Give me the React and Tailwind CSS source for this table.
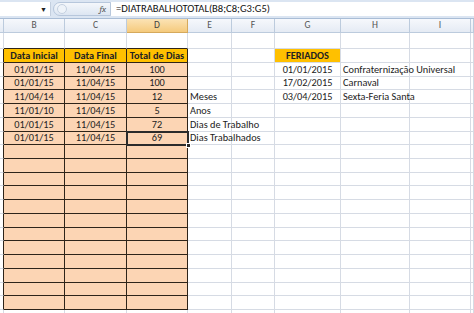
import React from "react";

const FONT = { fontFamily: "Carlito, Lato, 'Open Sans', sans-serif" };

// column widths: sliver of A, then B..I, J cut off at the edge
const COLS = [
  { key: "A", w: 4 },
  { key: "B", w: 61 },
  { key: "C", w: 62 },
  { key: "D", w: 61 },
  { key: "E", w: 44 },
  { key: "F", w: 43 },
  { key: "G", w: 66 },
  { key: "H", w: 69 },
  { key: "I", w: 61 },
  { key: "J", w: 3 },
];

const DATA = [
  ["01/01/15", "11/04/15", "100", ""],
  ["01/01/15", "11/04/15", "100", ""],
  ["11/04/14", "11/04/15", "12", "Meses"],
  ["11/01/10", "11/04/15", "5", "Anos"],
  ["01/01/15", "11/04/15", "72", "Dias de Trabalho"],
  ["01/01/15", "11/04/15", "69", "Dias Trabalhados"],
];

const HOLIDAYS = [
  ["01/01/2015", "Confraternização Universal"],
  ["17/02/2015", "Carnaval"],
  ["03/04/2015", "Sexta-Feria Santa"],
];

const GRID = "border-[#d6dbe4]";

function Cell({ w, className = "", children }) {
  return (
    <div
      className={`shrink-0 border-r border-b flex items-center overflow-visible whitespace-nowrap text-[10.3px] text-[#222] ${className}`}
      style={{ width: w }}
    >
      {children}
    </div>
  );
}

function FormulaBar() {
  return (
    <div className="h-[19px] flex items-stretch bg-[#dbe5f2] border-b border-[#a9bdd6]">
      <div className="w-[51px] mt-[2px] mb-[2px] bg-white flex items-center justify-end pr-[3px] border-r border-[#c3cfdf]">
        <span className="text-[7px] text-[#222] leading-none">▼</span>
      </div>
      <div className="w-[58px] my-[2px] ml-[2px] rounded-l-full bg-gradient-to-b from-[#f4f7fb] to-[#dde6f2] border border-[#b7c7dc] flex items-center justify-between pl-[3px] pr-[4px]">
        <div className="w-[10px] h-[10px] rounded-full border border-[#c4d0e0] bg-[#eef3f9]" />
        <span className="italic text-[9px] text-[#555] font-serif leading-none">fx</span>
      </div>
      <div className="flex-1 my-[2px] bg-white flex items-center pl-[5px] text-[10.6px] text-[#111]" style={FONT}>
        =DIATRABALHOTOTAL(B8;C8;G3:G5)
      </div>
    </div>
  );
}

function HeaderRow() {
  return (
    <div className="h-[14px] flex">
      {COLS.map((c) => (
        <div
          key={c.key}
          className={`shrink-0 border-r border-b flex items-center justify-center text-[9.5px] ${
            c.key === "D"
              ? "bg-gradient-to-b from-[#fbe3b5] to-[#f5ca7c] border-[#d5a95c] text-[#444]"
              : "bg-gradient-to-b from-[#f6f8fc] to-[#e5ebf4] border-[#bccbdd] text-[#555]"
          }`}
          style={{ width: c.w, ...FONT }}
        >
          {c.key === "A" || c.key === "J" ? "" : c.key}
        </div>
      ))}
    </div>
  );
}

function SheetRow({ height, cells }) {
  return (
    <div className="flex" style={{ height }}>
      {cells}
    </div>
  );
}

export default function App() {
  const rows = [];
  const H = 13.73;

  // row 1: blank, with dark bottom edges over B..D
  rows.push(
    <SheetRow
      key="r1"
      height={16.3}
      cells={COLS.map((c) => (
        <Cell
          key={c.key}
          w={c.w}
          className={["B", "C", "D"].includes(c.key) ? `${GRID} border-b-[#2e2419]` : GRID}
        />
      ))}
    />
  );

  // table rows: header, six data rows, twelve blank rows
  const total = 19;
  for (let i = 0; i < total; i++) {
    const isHead = i === 0;
    const d = !isHead && i <= 6 ? DATA[i - 1] : null;
    const hol = i >= 1 && i <= 3 ? HOLIDAYS[i - 1] : null;
    const cells = COLS.map((c) => {
      if (c.key === "A")
        return <Cell key={c.key} w={c.w} className={`${GRID} border-r-[#2e2419]`} />;
      if (["B", "C", "D"].includes(c.key)) {
        const idx = { B: 0, C: 1, D: 2 }[c.key];
        const text = isHead
          ? ["Data Inicial", "Data Final", "Total de Dias"][idx]
          : d
          ? d[idx]
          : "";
        return (
          <Cell
            key={c.key}
            w={c.w}
            className={`border-[#2e2419] justify-center ${
              isHead ? "bg-[#ffc000] font-bold text-[9.2px]" : "bg-[#fcd5b4]"
            }`}
          >
            <span style={FONT}>{text}</span>
          </Cell>
        );
      }
      if (c.key === "E")
        return (
          <Cell key={c.key} w={c.w} className={`${GRID} pl-[2px]`}>
            <span style={FONT}>{d ? d[3] : ""}</span>
          </Cell>
        );
      if (c.key === "G") {
        if (isHead)
          return (
            <Cell key={c.key} w={c.w} className={`${GRID} bg-[#ffc000] justify-center font-bold text-[9.2px]`}>
              <span style={FONT}>FERIADOS</span>
            </Cell>
          );
        return (
          <Cell key={c.key} w={c.w} className={`${GRID} justify-center`}>
            <span style={FONT}>{hol ? hol[0] : ""}</span>
          </Cell>
        );
      }
      if (c.key === "H")
        return (
          <Cell key={c.key} w={c.w} className={`${GRID} pl-[2px]`}>
            <span style={FONT}>{hol ? hol[1] : ""}</span>
          </Cell>
        );
      return <Cell key={c.key} w={c.w} className={GRID} />;
    });
    rows.push(<SheetRow key={`r${i}`} height={H} cells={cells} />);
  }

  // trailing partial row
  rows.push(
    <SheetRow
      key="tail"
      height={H}
      cells={COLS.map((c) => (
        <Cell key={c.key} w={c.w} className={GRID} />
      ))}
    />
  );

  return (
    <div className="w-[474px] h-[313px] overflow-hidden bg-white relative" style={FONT}>
      <FormulaBar />
      <HeaderRow />
      <div className="relative">
        {rows}
        {/* active cell D8 with fill handle */}
        <div
          className="absolute border-2 border-[#2b2b2b] pointer-events-none"
          style={{ left: 126, top: 16.3 + H * 6 - 1, width: 63, height: H + 1.5 }}
        />
        <div
          className="absolute w-[5px] h-[5px] bg-[#2b2b2b] border border-white pointer-events-none"
          style={{ left: 185.5, top: 16.3 + H * 7 - 2.5 }}
        />
      </div>
    </div>
  );
}
